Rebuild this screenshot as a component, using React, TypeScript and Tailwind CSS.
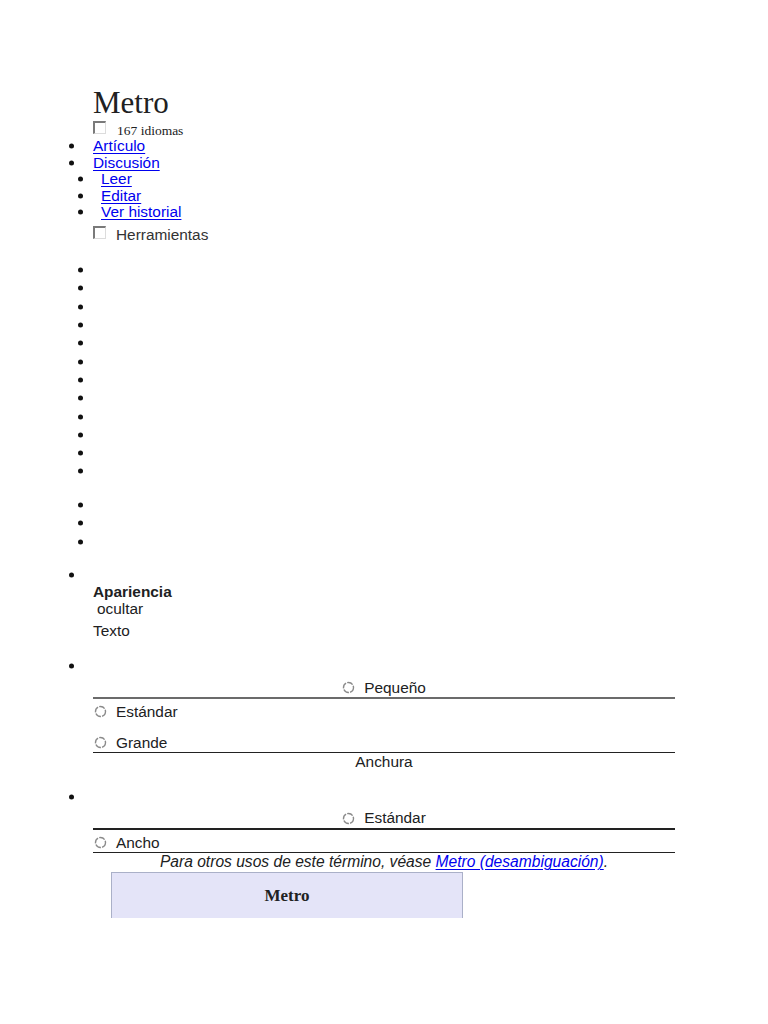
import React from "react";

const Dot = ({ x }: { x: number }) => (
  <span
    className="absolute top-1/2 -translate-y-1/2 w-[5px] h-[5px] rounded-full bg-[#111]"
    style={{ left: x - 93 - 2 }}
  />
);

const Radio = () => (
  <svg width="13" height="13" viewBox="0 0 13 13" className="shrink-0">
    <circle cx="6.5" cy="6.5" r="5" fill="#fff" stroke="#8a8a8a" strokeWidth="1.4" strokeDasharray="6 1.2" />
  </svg>
);

const Check = () => (
  <span className="inline-block w-[13px] h-[13px] border-t-2 border-l-2 border-r border-b border-t-[#7a7a7a] border-l-[#7a7a7a] border-r-[#dcdcdc] border-b-[#dcdcdc] bg-white shrink-0" />
);

const link = "text-[#0000ee] underline underline-offset-2";

export default function App() {
  const sans = { fontFamily: '"Liberation Sans", Arial, sans-serif' };
  const serif = { fontFamily: '"Liberation Serif", "Times New Roman", serif' };
  const bullets1 = Array.from({ length: 12 });
  const bullets2 = Array.from({ length: 3 });
  return (
    <div className="w-[768px] h-[1024px] bg-white text-[#202122] text-[15.4px]" style={sans}>
      <div className="pl-[93px] w-[675px] pt-[85px]">
        <h1 className="text-[31px] leading-[35px] h-[35px]" style={serif}>Metro</h1>
        <div className="h-[18px] flex items-start pt-[1px]">
          <Check />
          <span className="ml-[11px] text-[13.5px] leading-[18px] mt-[1px]" style={serif}>167 idiomas</span>
        </div>
        <div className="relative h-[16.5px] leading-[16.5px]"><Dot x={71} /><a className={link}>Artículo</a></div>
        <div className="relative h-[16.5px] leading-[16.5px]"><Dot x={71} /><a className={link}>Discusión</a></div>
        <div className="relative h-[16.5px] leading-[16.5px] pl-[8px]"><Dot x={80} /><a className={link}>Leer</a></div>
        <div className="relative h-[16.5px] leading-[16.5px] pl-[8px]"><Dot x={80} /><a className={link}>Editar</a></div>
        <div className="relative h-[16.5px] leading-[16.5px] pl-[8px]"><Dot x={80} /><a className={link}>Ver historial</a></div>
        <div className="h-[18px] flex items-start mt-[5px]">
          <Check />
          <span className="ml-[10px] leading-[18px] text-[#333]">Herramientas</span>
        </div>
        <div className="mt-[17.5px]">
          {bullets1.map((_, i) => (
            <div key={i} className="relative h-[18.3px]"><Dot x={80} /></div>
          ))}
        </div>
        <div className="mt-[15.4px]">
          {bullets2.map((_, i) => (
            <div key={i} className="relative h-[18.3px]"><Dot x={80} /></div>
          ))}
        </div>
        <div className="relative h-[18px] mt-[15px]"><Dot x={71} /></div>
        <div className="h-[16px] leading-[16px] font-bold">Apariencia</div>
        <div className="h-[18px] leading-[18px] pl-[4px]">ocultar</div>
        <div className="h-[18px] leading-[18px] mt-[4px]">Texto</div>
        <div className="relative h-[18px] mt-[17px]"><Dot x={71} /></div>
        <div className="h-[18px] mt-[4px] flex items-center justify-center gap-[9px]">
          <Radio /><span className="leading-[18px]">Pequeño</span>
        </div>
        <div className="h-[2px] bg-[#6b6b6b]" />
        <div className="h-[18px] mt-[4px] flex items-center gap-[9px] pl-[1px]">
          <Radio /><span className="leading-[18px]">Estándar</span>
        </div>
        <div className="h-[18px] mt-[13px] flex items-center gap-[9px] pl-[1px]">
          <Radio /><span className="leading-[18px]">Grande</span>
        </div>
        <div className="h-[1.5px] bg-[#222]" />
        <div className="h-[17px] leading-[17px] text-center">Anchura</div>
        <div className="relative h-[18px] mt-[18px]"><Dot x={71} /></div>
        <div className="h-[18px] mt-[3px] flex items-center justify-center gap-[9px]">
          <Radio /><span className="leading-[18px]">Estándar</span>
        </div>
        <div className="h-[1.5px] bg-[#222] mt-[1px]" />
        <div className="h-[18px] mt-[4px] flex items-center gap-[9px] pl-[1px]">
          <Radio /><span className="leading-[18px]">Ancho</span>
        </div>
        <div className="h-[1.5px] bg-[#222]" />
        <div className="h-[18px] leading-[17px] text-center italic text-[15.6px]">
          Para otros usos de este término, véase <a className={link}>Metro (desambiguación)</a>.
        </div>
        <div className="ml-[18px] w-[352px] h-[46px] mt-[1px] bg-[#e4e4f8] border-t border-l border-r border-[#aab0c8] flex items-center justify-center">
          <span className="font-bold text-[17px]" style={serif}>Metro</span>
        </div>
      </div>
    </div>
  );
}
